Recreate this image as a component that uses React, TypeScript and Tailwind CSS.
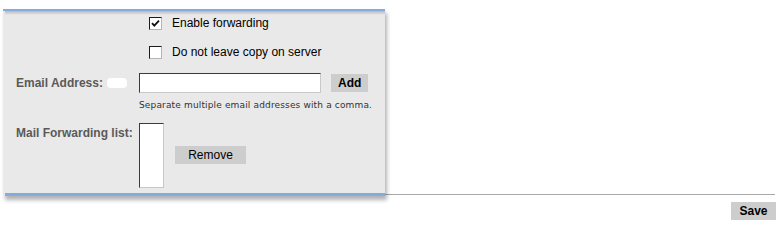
import { useState } from 'react'

const CheckBox = ({ checked }: { checked: boolean }) => (
  <span className="inline-flex items-center justify-center w-[13px] h-[13px] bg-white border border-[#1c1c1c] border-r-[#b5b5b5] border-b-[#b5b5b5]">
    {checked && (
      <svg viewBox="0 0 9 9" className="w-[9px] h-[9px]">
        <path d="M1 4.2 L3.3 6.6 L8 1.6" fill="none" stroke="#111" strokeWidth="1.8" />
      </svg>
    )}
  </span>
)

const App = () => {
  const [email, setEmail] = useState('')

  return (
    <div className="w-[780px] h-[225px] bg-white font-['Liberation_Sans',Arial,sans-serif] text-[12px] text-black">
      <div className="flex items-end pt-[9px]">
        {/* forwarding panel */}
        <div className="relative ml-[3px] w-[382px] bg-[#e9e9e9] shadow-[2px_4px_4px_rgba(0,0,0,0.3)]">
          <div className="h-[2px] bg-[#85aadf]" />
          <div className="h-[4px] bg-gradient-to-b from-[#b9b9b9] to-[#e9e9e9] ml-[2px]" />

          <div className="flex flex-col pb-[5px]">
            <label className="flex items-center gap-[10px] pl-[146px] mt-[2px] h-[12px]">
              <CheckBox checked />
              <span>Enable forwarding</span>
            </label>
            <label className="flex items-center gap-[10px] pl-[146px] mt-[16px] h-[14px]">
              <CheckBox checked={false} />
              <span>Do not leave copy on server</span>
            </label>

            <div className="flex items-center mt-[14px] pl-[13px]">
              <span className="w-[123px] flex items-center font-bold text-[#5a5a5a]">
                Email Address:
                <span className="ml-[4px] w-[20px] h-[10px] rounded-[4px] bg-white" />
              </span>
              <input
                value={email}
                onChange={(e) => setEmail(e.target.value)}
                className="w-[182px] h-[20px] bg-white border border-[#3a3a3a] border-r-[#c8c8c8] border-b-[#c8c8c8] outline-none px-1"
              />
              <button className="ml-[10px] h-[18px] px-[7px] bg-[#cdcdcd] font-bold text-[12px] text-black">
                Add
              </button>
            </div>
            <div className="pl-[136px] mt-[6px] font-['DejaVu_Sans',Verdana,sans-serif] text-[9px] tracking-[0.15px] text-[#333]">
              Separate multiple email addresses with a comma.
            </div>

            <div className="flex items-start mt-[10px] pl-[13px]">
              <span className="w-[123px] font-bold text-[#5a5a5a] mt-[1px]">Mail Forwarding list:</span>
              <div className="w-[25px] h-[65px] bg-white border border-[#3a3a3a] border-r-[#c8c8c8] border-b-[#c8c8c8]" />
              <button className="ml-[11px] mt-[23px] h-[18px] w-[71px] bg-[#cdcdcd] text-[12px] text-black">
                Remove
              </button>
            </div>
          </div>

          <div className="h-[3px] bg-[#85aadf] ml-[2px]" />
        </div>
        <div className="flex-1 mr-[5px] mb-[1px] border-b border-[#a8a8a8]" />
      </div>

      <div className="flex justify-end pr-[4px] mt-[6px]">
        <button className="h-[18px] w-[45px] bg-[#cdcdcd] font-bold text-[12px] text-black">Save</button>
      </div>
    </div>
  )
}

export default App
